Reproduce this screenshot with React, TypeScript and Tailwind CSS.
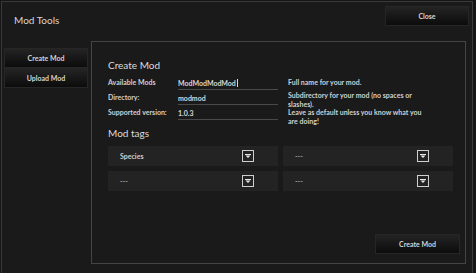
import React from "react";

function DarkButton({ label, className }: { label: string; className?: string }) {
  return (
    <div
      className={`flex items-center justify-center border border-[#262626] bg-gradient-to-b from-[#242424] to-[#0c0c0c] font-['Lato'] text-[7px] font-bold text-[#d4d4d4] ${className ?? ""}`}
    >
      {label}
    </div>
  );
}

function Arrow() {
  return (
    <div className="flex h-[12px] w-[12px] items-center justify-center border border-[#cfcfcf]">
      <svg width="6" height="4" viewBox="0 0 6 4">
        <rect x="0" y="0" width="6" height="1" fill="#e8e8e8" />
        <polygon points="0.5,1.5 5.5,1.5 3,4" fill="#e8e8e8" />
      </svg>
    </div>
  );
}

function Dropdown({ value }: { value: string }) {
  const dim = value === "---";
  return (
    <div className="flex h-[20px] w-[170px] items-center justify-between bg-[#232323] pl-[12px] pr-[24px]">
      <span className={`font-['Lato'] text-[7px] font-bold ${dim ? "text-[#9c9c9c]" : "text-[#cfcfcf]"}`}>{value}</span>
      <Arrow />
    </div>
  );
}

function Field({ value, caret }: { value: string; caret?: boolean }) {
  return (
    <div className="flex h-[15px] w-[100px] items-end border-b border-[#4a4a4a] pb-[2px]">
      <span className="font-['Lato'] text-[7px] leading-[8px] font-bold text-[#d8d8d8]">{value}</span>
      {caret && <span className="ml-px h-[8px] w-px bg-[#d8d8d8]" />}
    </div>
  );
}

export default function App() {
  return (
    <div className="h-[273px] w-[476px] overflow-hidden bg-[#151515] pl-px pt-px">
      <div className="flex h-[272px] w-[472px] flex-col border-l border-r border-t border-[#3a3a3a] bg-[#1a1a1a]">
        <div className="flex h-[39px] items-start justify-between">
          <span className="ml-[12px] mt-[11px] font-['Lato'] text-[10px] text-[#d6d6d6]">Mod Tools</span>
          <DarkButton label="Close" className="mr-[3px] mt-[4px] h-[20px] w-[84px]" />
        </div>
        <div className="flex">
          <div className="ml-[2px] mt-[7px] flex flex-col">
            <DarkButton label="Create Mod" className="h-[20px] w-[84px]" />
            <DarkButton label="Upload Mod" className="h-[20px] w-[84px]" />
          </div>
          <div className="ml-[3px] flex h-[223px] w-[375px] flex-col border border-[#444444] bg-[#1a1a1a] pl-[16px]">
            <span className="mt-[16px] h-[14px] font-['Lato'] text-[10px] leading-[14px] text-[#dcdcdc]">Create Mod</span>
            <div className="mt-[3px] flex">
              <div className="flex w-[70px] flex-col">
                {["Available Mods", "Directory:", "Supported version:"].map((l) => (
                  <div key={l} className="flex h-[15px] items-center font-['Lato'] text-[7px] font-bold text-[#d0d0d0]">
                    {l}
                  </div>
                ))}
              </div>
              <div className="flex flex-col">
                <Field value="ModModModMod" caret />
                <Field value="modmod" />
                <Field value="1.0.3" />
              </div>
              <div className="ml-[10px] flex flex-col font-['Lato'] text-[7px] font-bold text-[#d0d0d0]">
                <div className="flex h-[15px] items-center">Full name for your mod.</div>
                <div className="mt-[1px] whitespace-pre leading-[8.5px]">
                  {"Subdirectory for your mod (no spaces or\nslashes).\nLeave as default unless you know what you\nare doing!"}
                </div>
              </div>
            </div>
            <span className="mt-[1px] h-[14px] font-['Lato'] text-[10px] leading-[14px] text-[#dcdcdc]">Mod tags</span>
            <div className="mt-[6px] grid w-[345px] grid-cols-2 gap-[5px]">
              <Dropdown value="Species" />
              <Dropdown value="---" />
              <Dropdown value="---" />
              <Dropdown value="---" />
            </div>
            <div className="mt-auto mb-[9px] mr-[5px] flex justify-end">
              <DarkButton label="Create Mod" className="h-[20px] w-[85px]" />
            </div>
          </div>
        </div>
      </div>
    </div>
  );
}
